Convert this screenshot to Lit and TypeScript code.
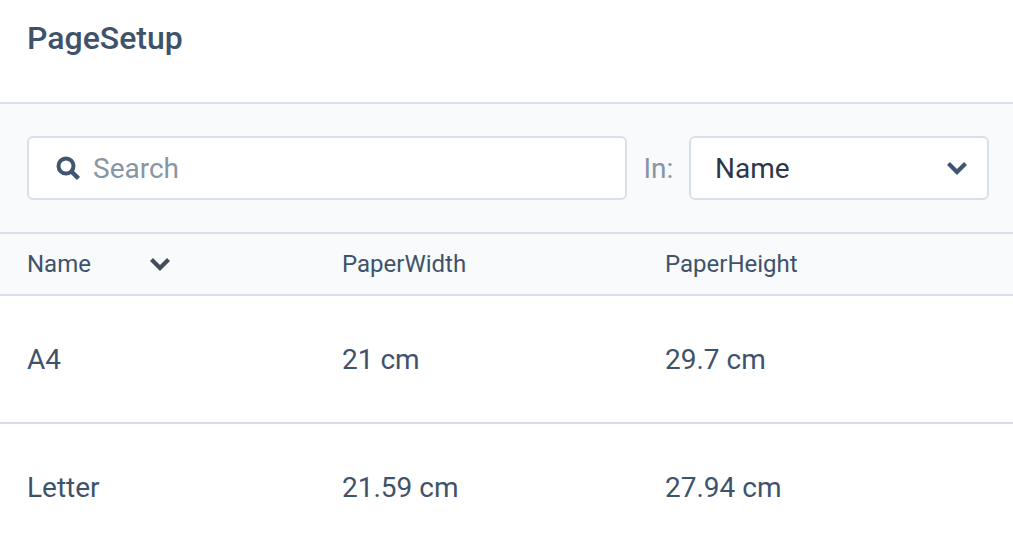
import { LitElement, html, css } from "lit";
import { customElement } from "lit/decorators.js";

const chevron = html`<svg class="chev" viewBox="0 0 22 14" width="22" height="14"><path d="M2.5 2.5l8.5 8.5 8.5-8.5" fill="none" stroke="currentColor" stroke-width="4.2"/></svg>`;

@customElement("app-root")
export class AppRoot extends LitElement {
  static styles = css`
    :host { display: block; height: 548px; overflow: hidden; background: #fff; font-family: Roboto, sans-serif; color: #3e536b; }
    .title { height: 102px; box-sizing: border-box; padding: 19px 27px 0; font-size: 32px; line-height: 38px; font-weight: 500; color: #3e536b; }
    .toolbar { display: flex; align-items: center; height: 130px; box-sizing: border-box; background: #f8fafc; border-top: 2px solid #d9e0ea; padding: 0 24px 0 27px; }
    .search, .select { flex: none; box-sizing: border-box; height: 64px; background: #fff; border: 2px solid #d9e0ea; border-radius: 6px; display: flex; align-items: center; font-size: 28px; }
    .search { width: 600px; padding-left: 27px; color: #8796a5; gap: 12px; }
    .icon { color: #3e5670; }
    .in { flex: 1; margin-left: 16.5px; font-size: 28px; color: #8796a5; }
    .select { width: 300px; padding: 0 19px 0 24px; justify-content: space-between; color: #2d3748; }
    .select .chev { color: #3e5670; }
    .row { display: grid; grid-template-columns: 315px 323px 1fr; padding-left: 27px; align-items: center; border-top: 2px solid #d9e0ea; box-sizing: border-box; }
    .head { height: 62px; background: #f8fafc; font-size: 24px; }
    .cell { height: 128px; font-size: 28px; }
    .cell + .cell { border-top-color: #d9dce9; }
    .name { display: flex; align-items: center; }
    .name .chev { margin-left: 58px; color: #424d59; }
  `;
  render() {
    return html`
      <div class="title">PageSetup</div>
      <div class="toolbar">
        <div class="search">
          <svg class="icon" width="25" height="25" viewBox="0 0 25 25"><circle cx="10" cy="10" r="7.5" fill="none" stroke="currentColor" stroke-width="4"/><path d="M15.5 15.5l7 7" stroke="currentColor" stroke-width="4.5"/></svg>
          <span>Search</span>
        </div>
        <span class="in">In:</span>
        <div class="select"><span>Name</span>${chevron}</div>
      </div>
      <div class="row head"><div class="name"><span>Name</span>${chevron}</div><div>PaperWidth</div><div>PaperHeight</div></div>
      <div class="row cell"><div>A4</div><div>21 cm</div><div>29.7 cm</div></div>
      <div class="row cell"><div>Letter</div><div>21.59 cm</div><div>27.94 cm</div></div>
    `;
  }
}
